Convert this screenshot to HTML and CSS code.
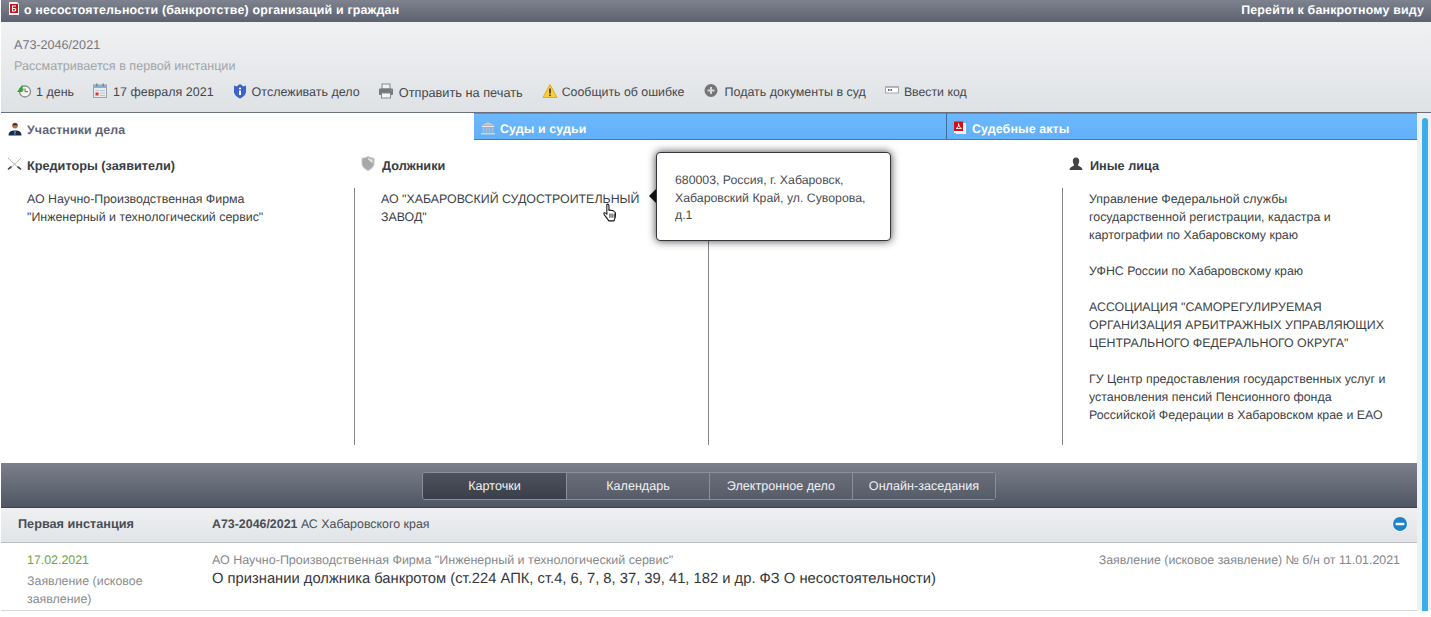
FILE: index.html
```html
<!DOCTYPE html>
<html lang="ru">
<head>
<meta charset="utf-8">
<title>А73-2046/2021</title>
<link rel="stylesheet" href="styles.css">
</head>
<body>
<div class="page">
  <header class="topbar">
    <div class="topbar-title">
      <svg class="ico-b" viewBox="0 0 12 14" width="12" height="14"><path d="M1 0h8l2 2v11H1z" fill="#f4f4f4"/><rect x="2" y="2" width="8" height="9" fill="#c8141c"/><path d="M4 3.500h4v1H5v1.500h1.500a1.700 1.700 0 0 1 0 3.600H4zM5 7v1.600h1.400a.8.8 0 0 0 0-1.600z" fill="#fff"/></svg>
      <span>о несостоятельности (банкротстве) организаций и граждан</span>
    </div>
    <a class="topbar-link">Перейти к банкротному виду</a>
  </header>

  <section class="case-head">
    <div class="case-num">А73-2046/2021</div>
    <div class="case-status">Рассматривается в первой инстанции</div>
    <div class="actions">
      <span class="action a1"><svg viewBox="0 0 16 16" width="16" height="16"><circle cx="9" cy="8.500" r="5.500" fill="#f5f5f0" stroke="#8a8c8f" stroke-width="1.300"/><path d="M9 5.500v3.200h3" fill="none" stroke="#666"/><path d="M6.500 1.500v7.500H1z" fill="#2fa52f"/><path d="M3 6.500h4.500" stroke="#2fa52f" stroke-width="2"/></svg>1 день</span>
      <span class="action a2"><svg viewBox="0 0 16 16" width="16" height="16"><rect x="1.500" y="2" width="13" height="12.500" fill="#e8eaec" stroke="#9aa2ab"/><rect x="1.500" y="2" width="13" height="3" fill="#7fb2e0"/><rect x="4" y="0.500" width="1.500" height="3" fill="#7d8791"/><rect x="10.500" y="0.500" width="1.500" height="3" fill="#7d8791"/><rect x="3.500" y="9.500" width="3" height="3" fill="#d03a30"/><path d="M8 7.500h5M8 10h5M8 12.500h5M3.500 7.500h3" stroke="#bfc4ca"/></svg>17 февраля 2021</span>
      <span class="action a3"><svg viewBox="0 0 16 16" width="16" height="16"><path d="M2 2.500l2.500 1L8 1l3.500 2.500 2.500-1v6c0 3.500-3 5.500-6 7-3-1.500-6-3.500-6-7z" fill="#3b62c8"/><circle cx="8" cy="5.500" r="1.100" fill="#fff"/><rect x="7" y="7.500" width="2" height="4.500" fill="#fff"/></svg>Отслеживать дело</span>
      <span class="action a4"><svg viewBox="0 0 16 16" width="16" height="16"><rect x="4" y="1" width="8" height="5" fill="#f2f2f2" stroke="#888"/><rect x="1" y="5.500" width="14" height="6.500" rx="1" fill="#74777c"/><rect x="3.500" y="10" width="9" height="5" fill="#f4f4f4" stroke="#888"/><rect x="12.500" y="7" width="1.500" height="1" fill="#5fc35f"/></svg>Отправить на печать</span>
      <span class="action a5"><svg viewBox="0 0 16 16" width="16" height="16"><path d="M8 1.500L15 14.500H1z" fill="#f7cf3a" stroke="#dcae1a" stroke-linejoin="round"/><rect x="7.200" y="5.500" width="1.600" height="5" fill="#333"/><rect x="7.200" y="11.500" width="1.600" height="1.600" fill="#333"/></svg>Сообщить об ошибке</span>
      <span class="action a6"><svg viewBox="0 0 16 16" width="16" height="16"><circle cx="8" cy="7.500" r="6.500" fill="#757575"/><path d="M8 4v7M4.500 7.500h7" stroke="#d8d8d8" stroke-width="2"/></svg>Подать документы в суд</span>
      <span class="action a7"><svg viewBox="0 0 16 16" width="16" height="16"><rect x="1.500" y="3.500" width="13" height="6.500" fill="#fff" stroke="#a5a8ab"/><rect x="1.500" y="3.500" width="13" height="1.500" fill="#b5b8bc"/><path d="M4 7h1.500M6.500 7H8" stroke="#333" stroke-width="1.400"/></svg>Ввести код</span>
    </div>
  </section>

  <div class="body-row">
    <div class="main">
      <nav class="tabs">
        <div class="tab tab-active"><svg viewBox="0 0 14 14" width="14" height="14"><circle cx="7" cy="3.600" r="2.900" fill="#b8764c"/><path d="M4.300 3.200a2.800 2.800 0 0 1 5.400 0z" fill="#3a2a20"/><path d="M0.500 13.500c0-3.800 2.500-5 6.500-5s6.500 1.200 6.500 5z" fill="#1d2a44"/><path d="M6 8.500h2l-.5 5h-1z" fill="#4b86c5"/></svg>Участники дела</div>
        <div class="tab tab-blue"><svg viewBox="0 0 16 14" width="16" height="14"><path d="M8 1L15 4.500H1z" fill="#c4c4c4"/><rect x="2" y="5" width="12" height="1" fill="#ececec"/><path d="M3.500 6.500v5M6.500 6.500v5M9.500 6.500v5M12.500 6.500v5" stroke="#c0c0c0" stroke-width="1.500"/><rect x="1" y="12" width="14" height="1.500" fill="#d4d4d4"/></svg>Суды и судьи</div>
        <div class="tab tab-blue tab-last"><svg viewBox="0 0 14 14" width="14" height="14"><rect x="3" y="2" width="10" height="11" fill="#f5f5f5"/><rect x="1" y="0.500" width="9" height="10" fill="#d2101c"/><path d="M3 7.500c1.500-.5 3-2 2.500-5 .5 3 1.500 4.500 3 5-1.500 0-3.500 0-5.500 0z" fill="none" stroke="#fff" stroke-width=".9"/><rect x="1" y="10" width="9" height="2" fill="#fff"/></svg>Судебные акты</div>
      </nav>

      <section class="parties">
        <div class="party">
          <h3 class="party-title"><svg viewBox="0 0 15 14" width="15" height="14"><path d="M1 1l10.500 10M14 1L3.500 11" stroke="#b4b4b4"/><path d="M1 12.500l2.500-2.500M14 12.500L11.500 10M4.500 9.500l-2 2M10.500 9.500l2 2" stroke="#444" stroke-width="1.400"/></svg>Кредиторы (заявители)</h3>
          <div class="party-body">
            <p>АО Научно-Производственная Фирма<br>"Инженерный и технологический сервис"</p>
          </div>
        </div>
        <div class="party">
          <h3 class="party-title t2"><svg viewBox="0 0 14 15" width="14" height="15"><path d="M7 0.500c2 1.300 4 1.700 6 1.700v5.300c0 3.200-3 5.500-6 7-3-1.500-6-3.800-6-7V2.200c2 0 4-.4 6-1.700z" fill="#a8a8a8" stroke="#c8c8c8"/><path d="M7 2c1.500 1 3 1.300 4.500 1.400v3.800L7 3.500z" fill="#e4e4e4"/></svg>Должники</h3>
          <div class="party-body">
            <p>АО "ХАБАРОВСКИЙ СУДОСТРОИТЕЛЬНЫЙ<br>ЗАВОД"</p>
          </div>
        </div>
        <div class="party">
          <h3 class="party-title empty">&nbsp;</h3>
          <div class="party-body"></div>
        </div>
        <div class="party party-last">
          <h3 class="party-title t4"><svg viewBox="0 0 14 14" width="14" height="14"><path d="M7 0.500c2 0 3.200 1.500 3.200 3.500S9 7.500 9 8.200c0 1 4.500 1.500 4.500 4.800h-13C.5 9.700 5 9.200 5 8.200 5 7.500 3.800 6 3.800 4S5 .5 7 .5z" fill="#444"/></svg>Иные лица</h3>
          <div class="party-body">
            <p>Управление Федеральной службы<br>государственной регистрации, кадастра и<br>картографии по Хабаровскому краю</p>
            <p>УФНС России по Хабаровскому краю</p>
            <p>АССОЦИАЦИЯ "САМОРЕГУЛИРУЕМАЯ<br>ОРГАНИЗАЦИЯ АРБИТРАЖНЫХ УПРАВЛЯЮЩИХ<br>ЦЕНТРАЛЬНОГО ФЕДЕРАЛЬНОГО ОКРУГА"</p>
            <p>ГУ Центр предоставления государственных услуг и<br>установления пенсий Пенсионного фонда<br>Российской Федерации в Хабаровском крае и ЕАО</p>
          </div>
        </div>
      </section>

      <div class="switchbar">
        <div class="switch">
          <span class="sw sw-on">Карточки</span>
          <span class="sw">Календарь</span>
          <span class="sw">Электронное дело</span>
          <span class="sw">Онлайн-заседания</span>
        </div>
      </div>

      <div class="inst-head">
        <div class="inst-name">Первая инстанция</div>
        <div class="inst-case"><b>А73-2046/2021</b> АС Хабаровского края</div>
        <svg class="collapse" viewBox="0 0 16 16" width="16" height="16"><circle cx="8" cy="8.500" r="7.500" fill="#fff"/><circle cx="8" cy="8" r="7" fill="#1b82cc"/><rect x="3.500" y="6.700" width="9" height="2.600" rx="1" fill="#fff"/></svg>
      </div>

      <div class="entry">
        <div class="entry-left">
          <div class="entry-date">17.02.2021</div>
          <div class="entry-type">Заявление (исковое заявление)</div>
        </div>
        <div class="entry-mid">
          <div class="entry-sub">
            <span class="sub-left">АО Научно-Производственная Фирма "Инженерный и технологический сервис"</span>
            <span>Заявление (исковое заявление) № б/н от 11.01.2021</span>
          </div>
          <div class="entry-title">О признании должника банкротом (ст.224 АПК, ст.4, 6, 7, 8, 37, 39, 41, 182 и др. ФЗ О несостоятельности)</div>
        </div>
      </div>
    </div>
    <aside class="scroll"><div class="thumb"></div></aside>
  </div>

  <div class="tooltip">680003, Россия, г. Хабаровск, Хабаровский Край, ул. Суворова, д.1</div>
  <svg class="cursor" viewBox="0 0 14 19" width="15" height="20"><path d="M3.500 1.500c.8-.8 1.800-.4 2 .5V7l1-.3 1.200.3 1.100.2 1.200.5c1.200.6 1.800 1.100 1.800 2.300l-.3 3.500-1.200 3.500H5.500L1 11c-.6-1-.4-1.800.4-1.800.9 0 1.600.8 2.200 1.500z" fill="#fff" stroke="#111" stroke-linejoin="round"/><path d="M6.500 10v4M8.500 10v4M10.500 10v4" stroke="#111" stroke-width=".9"/></svg>
</div>
</body>
</html>
```
FILE: styles.css
```css
* { box-sizing: border-box; }
html, body { margin: 0; padding: 0; height: 617px; overflow: hidden; background: #fff; }
body { font-family: "Liberation Sans", Arial, sans-serif; font-size: 12.4px; color: #3c3f46; text-rendering: geometricPrecision; }
.page { position: relative; width: 1431px; height: 617px; padding-left: 1px; overflow: hidden; }
.body-row { display: flex; }
.main { width: 1416px; flex: none; }

.topbar { display: flex; justify-content: space-between; align-items: center; height: 22px; padding: 0 7px 2px 7px; background: linear-gradient(#7d828e, #5c6271); color: #fff; font-weight: bold; font-size: 12.4px; letter-spacing: .18px; }
.topbar-title { display: flex; align-items: center; gap: 4px; }
.ico-b { flex: none; margin-top: -2px; }

.case-head { height: 91px; padding: 16px 13px 0; background: linear-gradient(#f0f1f3, #dfe2e5); border-bottom: 1px solid #6a6f7c; }
.case-num { height: 21px; line-height: 14px; color: #75777c; font-size: 12.6px; }
.case-status { height: 20px; line-height: 14px; color: #a2a5aa; font-size: 12.6px; }
.actions { display: flex; align-items: center; height: 18px; margin-top: 4px; color: #45474d; font-size: 12.5px; white-space: nowrap; }
.action { display: flex; align-items: center; gap: 4px; }
.action svg { flex: none; margin-top: -3px; }
.a1 { margin-left: 2px; gap: 4px; }
.a2 { margin-left: 18px; gap: 5px; }
.a3 { margin-left: 18px; }
.a4 { margin-left: 18px; gap: 5px; font-size: 12.75px; }
.a5 { margin-left: 19px; gap: 4px; font-size: 12.35px; }
.a6 { margin-left: 19px; gap: 5px; }
.a7 { margin-left: 18px; gap: 4px; font-size: 12.3px; }

.tabs { display: flex; height: 27px; }
.tab { display: flex; align-items: flex-end; gap: 4px; padding: 0 0 3px 6px; font-weight: bold; font-size: 12.4px; letter-spacing: .12px; }
.tab svg { margin-bottom: 1px; flex: none; }
.tab-active { width: 473px; color: #5f6373; padding-left: 7px; gap: 5px; }
.tab-blue { width: 472px; color: #fff; background: linear-gradient(#6cb9ff, #62b0f8); border-bottom: 1px solid #3c7cb8; box-shadow: inset 0 1px 0 #5a90c8; }
.tab-last { width: 471px; border-left: 1px solid #3a6ea5; gap: 5px; }

.parties { display: flex; height: 323px; padding-top: 18px; }
.party { width: 354px; flex: none; }
.party-title { display: flex; align-items: center; gap: 5px; height: 16px; margin: 0 0 14px 6px; font-size: 12.7px; font-weight: bold; color: #3a3c43; }
.party-title svg { flex: none; margin-top: -5px; }
.t2 { gap: 7px; }
.t4 { gap: 7px; }
.party-body { height: 257px; padding: 2px 0 0 26px; border-right: 1px solid #80848f; line-height: 18px; color: #3c3f46; font-size: 12.4px; white-space: nowrap; }
.party-last .party-body { border-right: 0; width: 352px; }
.party-body p { margin: 0 0 18px; }

.switchbar { display: flex; justify-content: center; height: 45px; padding-top: 9px; background: linear-gradient(#7b808b, #4f5563); border-bottom: 1px solid #3d424e; }
.switch { display: flex; height: 28px; border: 1px solid #8a8f9b; border-radius: 3px; color: #fff; font-size: 12.6px; }
.sw { display: flex; align-items: center; justify-content: center; width: 143px; border-left: 1px solid #8a8f9b; background: linear-gradient(#686d79, #575c69); color: #f0f1f3; }
.sw-on { border-left: 0; background: linear-gradient(#4c515d, #3b3f4a); border-radius: 2px 0 0 2px; }

.inst-head { display: flex; align-items: center; position: relative; height: 35px; padding-bottom: 3px; background: linear-gradient(#eff0f2, #e1e4e7); border-bottom: 1px solid #bcbec2; font-size: 12.4px; }
.inst-name { width: 211px; padding-left: 17px; font-weight: bold; color: #4a4d55; font-size: 12.7px; }
.inst-case { color: #4a4d55; }
.collapse { position: absolute; right: 9px; top: 8px; }

.entry { display: flex; height: 68px; padding-top: 8px; border-bottom: 1px solid #d5d6d8; }
.entry-left { width: 211px; padding-left: 26px; flex: none; }
.entry-date { height: 21px; line-height: 18px; color: #6ea446; font-size: 12.4px; }
.entry-type { width: 130px; line-height: 18px; color: #8a8c90; font-size: 12.4px; }
.entry-mid { flex: 1; padding-right: 17px; }
.entry-sub { display: flex; justify-content: space-between; line-height: 19px; color: #85878b; font-size: 12.4px; }
.sub-left { font-size: 12.5px; }
.entry-title { line-height: 18px; color: #35373c; font-size: 14.76px; }

.scroll { width: 14px; flex: none; background: #eef0f3; padding: 5px 3px 0 5px; }
.thumb { height: 100%; border-radius: 3px 3px 0 0; background: #3aaeea; }

.tooltip { position: absolute; left: 656px; top: 152px; width: 235px; height: 89px; padding: 19px 18px 0; border: 1px solid #34363c; border-radius: 4px; background: #fff; box-shadow: 0 0 9px rgba(0,0,0,.75); line-height: 17.5px; font-size: 12.3px; color: #4a4c52; }
.tooltip::before { content: ""; position: absolute; left: -8px; top: 36px; border: 7px solid transparent; border-left: 0; border-right: 7px solid #111; }
.cursor { position: absolute; left: 603px; top: 203px; }
```
